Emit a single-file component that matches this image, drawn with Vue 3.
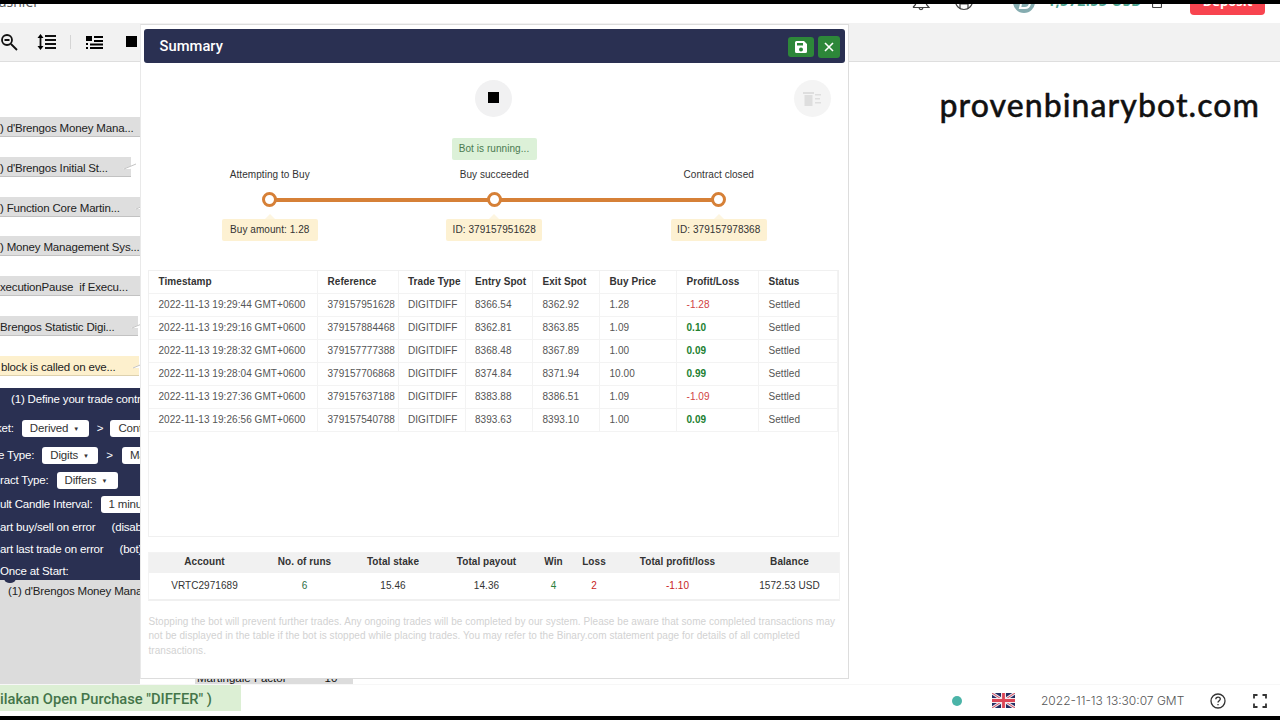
<script setup>
  const trades = [
    { time: '2022-11-13 19:29:44 GMT+0600', reference: '379157951628', entry: '8366.54', exit: '8362.92', price: '1.28', profit: '-1.28' },
    { time: '2022-11-13 19:29:16 GMT+0600', reference: '379157884468', entry: '8362.81', exit: '8363.85', price: '1.09', profit: '0.10' },
    { time: '2022-11-13 19:28:32 GMT+0600', reference: '379157777388', entry: '8368.48', exit: '8367.89', price: '1.00', profit: '0.09' },
    { time: '2022-11-13 19:28:04 GMT+0600', reference: '379157706868', entry: '8374.84', exit: '8371.94', price: '10.00', profit: '0.99' },
    { time: '2022-11-13 19:27:36 GMT+0600', reference: '379157637188', entry: '8383.88', exit: '8386.51', price: '1.09', profit: '-1.09' },
    { time: '2022-11-13 19:26:56 GMT+0600', reference: '379157540788', entry: '8393.63', exit: '8393.10', price: '1.00', profit: '0.09' }
  ]

  const columns = ['Timestamp', 'Reference', 'Trade Type', 'Entry Spot', 'Exit Spot', 'Buy Price', 'Profit/Loss', 'Status']

  const steps = [
    { label: 'Attempting to Buy', note: 'Buy amount: 1.28' },
    { label: 'Buy succeeded', note: 'ID: 379157951628' },
    { label: 'Contract closed', note: 'ID: 379157978368' }
  ]

  const summary = [
    { label: 'Account', value: 'VRTC2971689' },
    { label: 'No. of runs', value: '6', color: 'deep-green' },
    { label: 'Total stake', value: '15.46' },
    { label: 'Total payout', value: '14.36' },
    { label: 'Win', value: '4', color: 'green' },
    { label: 'Loss', value: '2', color: 'red' },
    { label: 'Total profit/loss', value: '-1.10', color: 'red' },
    { label: 'Balance', value: '1572.53 USD' }
  ]

  // collapsed blocks on the blockly canvas
  const blocks = [
    { text: ") d'Brengos Money Mana...", top: 117, width: 142 },
    { text: ") d'Brengos Initial St...", top: 157, width: 131, notch: 123 },
    { text: ') Function Core Martin...', top: 197, width: 142, notch: 135 },
    { text: ') Money Management Sys...', top: 236, width: 142 },
    { text: 'xecutionPause  if Execu...', top: 276, width: 142 },
    { text: 'Brengos Statistic Digi...', top: 316, width: 138, notch: 131 },
    { text: 'block is called on eve...', top: 356, width: 139, notch: 132, cream: true }
  ]
</script>

<template>
  <div class="page">
    <div class="letterbox"></div>
    <header class="header">
      <div class="header-inner">
        <span class="cashier">Cashier</span>
        <svg class="bell" width="18" height="22" viewBox="0 0 18 22"><path d="M1 18.5h16l-2.5-3V8a5.500 5.500 0 0 0-11 0v7.500L1 18.500M7 18.500c.2 2.700 3.800 2.700 4 0" /></svg>
        <svg class="account-icon" width="20" height="20" viewBox="0 0 20 20"><circle cx="10" cy="10" r="8.500" /><path d="M6 6v12M14 6v12M6 13h8" /></svg>
        <svg class="coin" width="22" height="22" viewBox="0 0 22 22"><circle cx="11" cy="11" r="11" fill="#85acb0" /><path d="M8 5h4q5 0 5 6t-5 6H7l1-4" fill="none" stroke="#fff" stroke-width="2" /></svg>
        <span class="money">1,572.53 USD</span>
        <svg class="lock" width="10" height="12" viewBox="0 0 10 12"><rect x=".5" y="3.500" width="9" height="8" rx="1" /></svg>
        <button class="deposit">Deposit</button>
      </div>
    </header>
    <div class="toolbar">
      <svg width="18" height="18" viewBox="0 0 18 18" fill="none" stroke="#111" stroke-width="1.800"><circle cx="7" cy="7" r="5" /><path d="M4.500 7h5M11 11l6 6" /></svg>
      <svg class="sort" width="20" height="16" viewBox="0 0 20 16"><path d="M3.500 2v12M8 2h11M8 6h11M8 10h11M8 14h11" fill="none" stroke="#111" stroke-width="1.800" /><path d="M.5 4L3.500 0l3 4zM.5 12l3 4 3-4z" /></svg>
      <i class="separator"></i>
      <svg class="list" width="18" height="14" viewBox="0 0 18 14"><path d="M0 1h6v5H0zM0 8h2v2H0zM0 12h2v2H0zM8 1h9v2H8zM8 5h9v2H8zM4 8.500h13v2H4zM4 12h13v2H4z" /></svg>
      <i class="stop"></i>
    </div>

    <main class="workspace">
      <div class="watermark">provenbinarybot.com</div>
    </main>

    <footer class="footer">
      <div class="notify">ilakan Open Purchase "DIFFER" )</div>
      <div class="status">
        <i class="online"></i>
        <svg class="flag" width="23" height="15" viewBox="0 0 23 15">
          <path d="M0 0h23v15H0z" fill="#252d62" />
          <path d="M0 0l23 15M23 0L0 15" stroke="#e9e5ed" stroke-width="3" />
          <path d="M0 0l23 15M23 0L0 15" stroke="#d84b5c" stroke-width="1" />
          <path d="M11.500 0v15M0 7.500h23" stroke="#f5e8ec" stroke-width="5" />
          <path d="M11.500 0v15M0 7.500h23" stroke="#dc4555" stroke-width="2.800" />
        </svg>
        <span class="clock">2022-11-13 13:30:07 GMT</span>
        <svg class="help" width="16" height="16" viewBox="0 0 16 16"><circle cx="8" cy="8" r="7" /><path d="M5.800 6.300c0-3 4.500-2.800 4.500-.2 0 1.600-2.300 1.600-2.300 3.400M8 11v1.300" /></svg>
        <svg class="expand" width="14" height="14" viewBox="0 0 14 14"><path d="M1 4.500V1h3.500M9.500 1H13v3.500M13 9.500V13H9.500M4.500 13H1V9.500" /></svg>
      </div>
    </footer>
    <div class="letterbox"></div>

    <div class="canvas">
      <div v-for="block in blocks" :key="block.top" class="block" :class="{ cream: block.cream }"
           :style="{ top: block.top + 'px', width: block.width + 'px' }">
        <span :class="{ indent: block.cream }">{{ block.text }}</span>
        <svg v-if="block.notch" class="notch" :style="{ left: block.notch + 'px' }" width="14" height="11" viewBox="0 0 14 11">
          <path d="M10 0L8 2v7l2 2h4V0z" fill="#fff" /><path d="M0 9l13-5v3L7 9z" fill="#fff" /><path d="M1 9l12-5" stroke="#c4c4c4" />
        </svg>
      </div>
      <div class="trade-block">
        <p class="define">(1) Define your trade contract</p>
        <p class="market">ket: <b class="derived">Derived <i>▼</i></b> <span>&gt;</span> <b class="wide">Continuous</b></p>
        <p class="type">e Type: <b class="digits">Digits <i>▼</i></b> <span>&gt;</span> <b class="wide">Matches</b></p>
        <p class="contract">ract Type: <b class="differs">Differs <i>▼</i></b></p>
        <p class="candle">ult Candle Interval: <b class="minute">1 minute</b></p>
        <p class="restart">art buy/sell on error <em>(disable)</em></p>
        <p class="restart-last">art last trade on error <em>(bot)</em></p>
        <p class="once">Once at Start:</p>
        <div class="nub"></div>
      </div>
      <div class="start-block">(1) d'Brengos Money Management</div>
    </div>
    <div class="martingale"><span>Martingale Factor</span><b></b><span>10</span></div>

    <section class="dialog">
      <div class="titlebar">
        <h1>Summary</h1>
        <button class="save"><svg width="12" height="12" viewBox="0 0 12 12"><path fill-rule="evenodd" d="M1.500 0H9l3 3v7.500a1.500 1.500 0 0 1-1.500 1.500h-9A1.500 1.500 0 0 1 0 10.500v-9A1.500 1.500 0 0 1 1.500 0zM2 2v2.500h6V2zM6 6.500a2 2 0 1 0 0 4 2 2 0 0 0 0-4z" fill="#fff" /></svg></button>
        <button class="close"><svg width="10" height="10" viewBox="0 0 10 10"><path d="M1 1l8 8M9 1L1 9" stroke="#fff" stroke-width="1.600" /></svg></button>
      </div>
      <div class="controls">
        <button class="round"><i></i></button>
        <button class="round clear"><svg width="19" height="15" viewBox="0 0 19 15"><path d="M0 1h11v2H0zM1.500 4h8v11h-8zM12 3h6v1.500h-6zM12 7h5v1.500h-5zM12 11h6v1.500h-6z" fill="#dedede" /></svg></button>
      </div>
      <div class="running"><span>Bot is running...</span></div>
      <div class="steps">
        <div v-for="step in steps" :key="step.label" class="step">
          <div class="step-label">{{ step.label }}</div>
          <div class="track"><i></i></div>
          <div class="note">{{ step.note }}</div>
        </div>
      </div>
      <div class="trades">
        <div class="row head"><span v-for="column in columns" :key="column">{{ column }}</span></div>
        <div v-for="trade in trades" :key="trade.time" class="row">
          <span>{{ trade.time }}</span>
          <span>{{ trade.reference }}</span>
          <span>DIGITDIFF</span>
          <span>{{ trade.entry }}</span>
          <span>{{ trade.exit }}</span>
          <span>{{ trade.price }}</span>
          <span :class="trade.profit < 0 ? 'loss' : 'profit'">{{ trade.profit }}</span>
          <span>Settled</span>
        </div>
      </div>
      <div class="summary">
        <div class="sum-row sum-head"><span v-for="item in summary" :key="item.label">{{ item.label }}</span></div>
        <div class="sum-row"><span v-for="item in summary" :key="item.label" :class="item.color">{{ item.value }}</span></div>
      </div>
      <p class="disclaimer">
        Stopping the bot will prevent further trades. Any ongoing trades will be completed by our system. Please be aware that some completed transactions may<br />
        not be displayed in the table if the bot is stopped while placing trades. You may refer to the Binary.com statement page for details of all completed<br />
        transactions.
      </p>
    </section>
  </div>
</template>

<style>
  body {
    margin: 0;
    overflow: hidden;
  }
</style>

<style scoped>
  .page {
    position: relative;
    width: 1280px;
    height: 720px;
    display: flex;
    flex-direction: column;
    overflow: hidden;
    background: #fff;
    font-family: "Liberation Sans", sans-serif;
    color: #333;
  }

  .page * {
    box-sizing: border-box;
  }

  svg {
    flex: none;
  }

  button {
    border: 0;
    padding: 0;
    display: flex;
    align-items: center;
    justify-content: center;
  }

  .letterbox {
    height: 4px;
    background: #000;
  }

  .header {
    height: 19px;
    display: flex;
    align-items: flex-end;
    overflow: hidden;
  }

  .header-inner {
    width: 1280px;
    height: 48px;
    flex: none;
    display: flex;
    align-items: center;
    padding-right: 15px;
    color: #555;
    font: 14px/20px "Open Sans", sans-serif;
  }

  .cashier {
    width: 60px;
    margin: 6px auto 0 -10px;
  }

  .bell, .account-icon, .lock {
    fill: none;
    stroke: #444;
    stroke-width: 1.2;
  }

  .bell {
    margin: 2px 24px 0 0;
  }

  .account-icon {
    margin: 3px 39px 0 0;
  }

  .coin {
    margin: 6px 12px 0 0;
  }

  .money {
    width: 95px;
    margin-top: 4px;
    color: #4ba38e;
    font-weight: 700;
    letter-spacing: .55px;
    white-space: nowrap;
  }

  .lock {
    margin: 5px 28px 0 10px;
  }

  .deposit {
    width: 75px;
    height: 32px;
    border-radius: 4px;
    background: #f8444f;
    color: #fff;
    font: 700 13px/20px "Open Sans", sans-serif;
    padding-top: 4px;
  }

  .toolbar {
    height: 39px;
    background: #f2f2f2;
    border-bottom: 1px solid #dedede;
    display: flex;
    align-items: center;
    padding-bottom: 1px;
  }

  .sort {
    margin-left: 19px;
  }

  .separator {
    width: 1px;
    height: 14px;
    margin: 0 15px 0 13px;
    background: #d5d5d5;
  }

  .list {
    margin-right: 22px;
  }

  .stop {
    width: 11px;
    height: 11px;
    background: #000;
  }

  .workspace {
    height: 622px;
    display: flex;
    justify-content: flex-end;
    align-items: flex-start;
    padding: 23px 20px 0 0;
  }

  .watermark {
    color: #111;
    font: 500 32px/40px Lato, sans-serif;
    letter-spacing: 1.05px;
    -webkit-text-stroke: .4px #111;
  }

  .footer {
    height: 32px;
    display: flex;
    align-items: flex-start;
    justify-content: space-between;
    border-top: 1px solid #f7f7f7;
  }

  .notify {
    width: 241px;
    height: 26px;
    background: #dcefd4;
    color: #44754a;
    font: 500 14.7px/29px Roboto, sans-serif;
    white-space: nowrap;
  }

  .status {
    height: 31px;
    display: flex;
    align-items: center;
    padding-right: 13px;
  }

  .online {
    width: 10px;
    height: 10px;
    border-radius: 50%;
    background: #4bb4a8;
    margin-right: 30px;
  }

  .clock {
    width: 143px;
    margin: 0 26px;
    color: #555;
    font: 300 12px/16px Inter, sans-serif;
    white-space: nowrap;
  }

  .help, .expand {
    fill: none;
    stroke: #333;
    stroke-width: 1.3;
  }

  .expand {
    margin-left: 27px;
    stroke-width: 1.8;
  }

  .canvas {
    position: absolute;
    top: 0;
    left: 0;
    width: 140px;
    height: 684px;
    overflow: hidden;
    z-index: 0;
    font-size: 11.5px;
    letter-spacing: -.17px;
    color: #222;
  }

  .block {
    position: absolute;
    left: 0;
    height: 20px;
    background: #dedede;
    border-bottom: 1px solid #c2c2c2;
    line-height: 22px;
    white-space: pre;
  }

  .cream {
    background: #fdf0cd;
    border-color: #ddd1ae;
  }

  .indent {
    padding-left: 1px;
  }

  .notch {
    position: absolute;
    top: 3px;
  }

  .trade-block {
    position: absolute;
    top: 388px;
    left: 0;
    width: 142px;
    height: 192px;
    background: #2a3052;
    color: #fff;
  }

  .trade-block p {
    margin: 0;
    display: flex;
    align-items: center;
    height: 22px;
    white-space: nowrap;
  }

  .trade-block .define {
    padding-left: 11px;
  }

  .trade-block .market {
    height: 36px;
    margin-left: -4px;
  }

  .trade-block .type {
    height: 18px;
    margin-left: -2px;
  }

  .trade-block .contract {
    height: 32px;
  }

  .trade-block .candle {
    height: 16px;
  }

  .trade-block .restart {
    height: 29px;
  }

  .trade-block .restart-last {
    height: 16px;
  }

  .trade-block .once {
    height: 28px;
  }

  .trade-block b {
    flex: none;
    height: 17px;
    border-radius: 3px;
    background: #fff;
    color: #333;
    font-weight: 400;
    line-height: 16px;
    padding-left: 8px;
  }

  .trade-block b i {
    font-size: 6px;
    font-style: normal;
    margin-left: 2px;
    vertical-align: 1px;
  }

  .trade-block span {
    margin: 0 7px 0 8px;
  }

  .trade-block .type span {
    margin-right: 9px;
  }

  .derived {
    width: 67px;
    margin-left: 8px;
  }

  .digits {
    width: 56px;
    margin-left: 8px;
  }

  .differs {
    width: 61px;
    margin-left: 8px;
  }

  .minute {
    width: 60px;
    margin-left: 8px;
  }

  .wide {
    width: 80px;
  }

  .trade-block em {
    font-style: normal;
    margin-left: 16px;
  }

  .nub {
    position: absolute;
    top: 190px;
    left: 4px;
    width: 12px;
    height: 5px;
    background: #2a3052;
    border-radius: 0 0 6px 6px;
  }

  .start-block {
    position: absolute;
    top: 580px;
    left: 0;
    width: 142px;
    height: 104px;
    z-index: -1;
    background: #dcdcdc;
    padding-left: 8px;
    line-height: 23px;
    white-space: nowrap;
  }

  .martingale {
    position: absolute;
    top: 668px;
    left: 141px;
    width: 212px;
    height: 16px;
    background: linear-gradient(90deg, #fff 54px, #dcdcdc 54px);
    color: #111;
    font-size: 11.5px;
    line-height: 20px;
    display: flex;
    padding-left: 56px;
    white-space: nowrap;
  }

  .martingale b {
    width: 38px;
  }

  .dialog {
    position: absolute;
    top: 24px;
    left: 140px;
    width: 709px;
    height: 655px;
    background: #fff;
    border: 1px solid #ddd;
    border-left-color: #e9e9e9;
    padding: 4px 3px 0;
    font-size: 10px;
    letter-spacing: .06px;
    z-index: 1;
  }

  .titlebar {
    width: 701px;
    height: 34px;
    background: #2a3052;
    border-radius: 3px;
    display: flex;
    align-items: center;
    padding: 2px 5px 0 15.5px;
  }

  .titlebar h1 {
    margin: 0 auto 3px 0;
    color: #fff;
    font: 500 14.7px/20px Roboto, sans-serif;
  }

  .titlebar button {
    background: #2d8739;
    border-radius: 3px;
  }

  .save {
    width: 26px;
    height: 20px;
  }

  .close {
    width: 22px;
    height: 22px;
    margin-left: 4px;
  }

  .controls {
    height: 54px;
    display: flex;
    justify-content: flex-end;
    align-items: flex-end;
    gap: 282px;
    padding-right: 14px;
  }

  .round {
    width: 37px;
    height: 37px;
    border-radius: 50%;
    background: #f1f1f2;
  }

  .round i {
    width: 11px;
    height: 11px;
    background: #000;
    margin-bottom: 2px;
  }

  .clear {
    background: #f4f4f4;
  }

  .running {
    display: flex;
    justify-content: center;
    padding: 21px 1px 0 0;
  }

  .running span {
    width: 85px;
    height: 22px;
    border-radius: 2px;
    background: #dcf1d8;
    color: #4b7b50;
    line-height: 21px;
    text-align: center;
  }

  .steps {
    display: grid;
    grid-template-columns: repeat(3, 224.5px);
    padding: 7px 0 0 13.5px;
  }

  .step {
    display: flex;
    flex-direction: column;
    align-items: center;
  }

  .step-label {
    height: 14px;
    line-height: 15px;
  }

  .track {
    width: 100%;
    height: 15px;
    margin: 11px 0 5px;
    display: flex;
    align-items: center;
    justify-content: center;
    background: linear-gradient(#d68037, #d68037) 0 6px / 100% 4px no-repeat;
  }

  .step:first-child .track {
    background-position: 100% 6px;
    background-size: 50% 4px;
  }

  .step:last-child .track {
    background-size: 50% 4px;
  }

  .track i {
    width: 15px;
    height: 15px;
    border: 3px solid #d68037;
    border-radius: 50%;
    background: #fff;
  }

  .note {
    position: relative;
    min-width: 96px;
    height: 22px;
    margin-top: 7px;
    border-radius: 2px;
    background: #fdf1d2;
    line-height: 22px;
    text-align: center;
  }

  .note::before {
    content: "";
    position: absolute;
    left: 43px;
    top: -5px;
    border: 5px solid transparent;
    border-top: 0;
    border-bottom-color: #fdf5e0;
  }

  .trades {
    width: 691px;
    height: 267px;
    margin: 29px 0 0 4px;
    border: 1px solid #f0f0f0;
  }

  .row {
    display: grid;
    grid-template-columns: 169px 81px 67px 67px 67px 77px 82px 79px;
    height: 23px;
    line-height: 23px;
    color: #555;
  }

  .row span {
    border-right: 1px solid #f3f3f3;
    border-bottom: 1px solid #f3f3f3;
    padding-left: 9.5px;
    white-space: nowrap;
  }

  .row span:nth-child(3), .row span:nth-child(4) {
    padding-left: 9px;
  }

  .row.head {
    height: 22px;
    line-height: 22px;
    font-weight: 700;
    color: #333;
  }

  .row .loss {
    color: #d14444;
  }

  .row .profit {
    color: #228030;
    font-weight: 700;
  }

  .summary {
    width: 692px;
    height: 49px;
    margin: 15px 0 0 4px;
    border: 1px solid #f3f3f3;
    border-bottom: 2px solid #f0f0f0;
  }

  .sum-row {
    display: grid;
    grid-template-columns: 111px 89px 88px 99px 35px 46px 121px 103px;
    height: 26px;
    line-height: 26px;
    text-align: center;
  }

  .sum-row.sum-head {
    height: 20px;
    background: #f1f1f1;
    line-height: 18px;
    font-weight: 700;
  }

  .deep-green {
    color: #2e6d45;
  }

  .green {
    color: #27803d;
  }

  .red {
    color: #c82424;
  }

  .disclaimer {
    margin: 14px 0 0 4.5px;
    color: #d2d2d2;
    line-height: 14.4px;
    white-space: nowrap;
  }
</style>
